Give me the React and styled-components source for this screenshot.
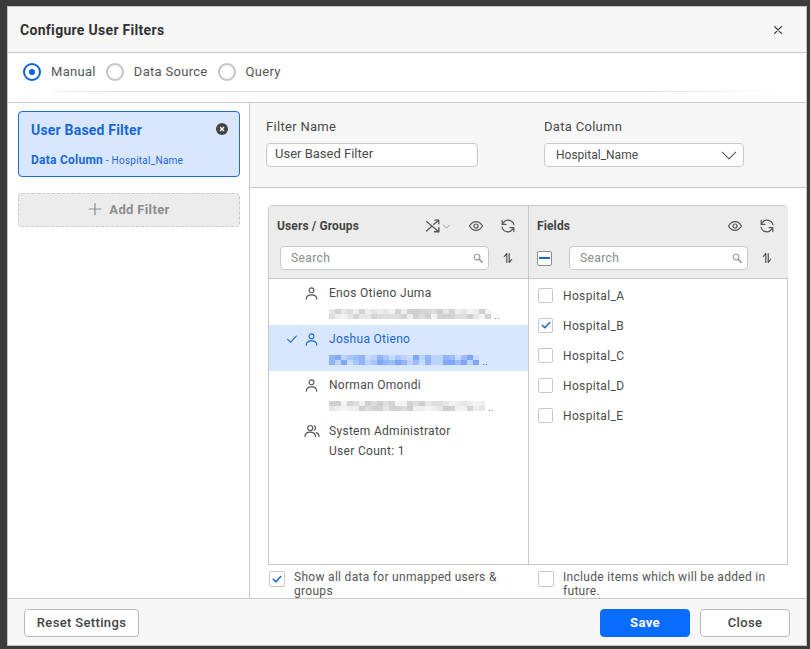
import React from 'react'
import styled, { createGlobalStyle } from 'styled-components'

const GlobalStyle = createGlobalStyle`
	html, body {
		margin: 0;
		padding: 0;
		height: 649px;
		overflow: hidden;
		background: #3b3b3b;
		font-family: Roboto, "Liberation Sans", sans-serif;
		color: #333;
	}
	* {
		box-sizing: border-box;
	}
`

const Dialog = styled.div`
	width: 800px;
	height: 640px;
	margin: 6px 0 0 7px;
	background: #fff;
	border: 1px solid #c4c4c4;
	display: flex;
	flex-direction: column;
	overflow: hidden;
`

const Header = styled.div`
	height: 46px;
	flex: none;
	background: #f7f7f7;
	border-bottom: 1px solid #c8c8c8;
	padding: 0 22px 0 12px;
	display: flex;
	align-items: center;
	justify-content: space-between;
`

const Title = styled.div`
	font-size: 14px;
	font-weight: 700;
	letter-spacing: 0.3px;
	color: #333;
`

const RadioSection = styled.div`
	height: 50px;
	flex: none;
	border-bottom: 1px solid #c8c8c8;
	padding: 0 20px 0 15px;
	display: flex;
	flex-direction: column;
`

const RadioRow = styled.div`
	height: 38px;
	display: flex;
	align-items: center;
`

const RadioItem = styled.label`
	display: flex;
	align-items: center;
	font-size: 13px;
	letter-spacing: 0.3px;
	color: #555;
	margin-right: 10px;
`

const RadioText = styled.span`
	padding-bottom: 2px;
`

const RadioMark = styled.span`
	width: 18px;
	height: 18px;
	border-radius: 50%;
	margin-right: 10px;
	background: #fff;
	border: ${(props) => (props.$on ? '2px solid #0f62d6' : '2px solid #c2c2c2')};
	display: flex;
	align-items: center;
	justify-content: center;

	&::after {
		content: '';
		display: ${(props) => (props.$on ? 'block' : 'none')};
		width: 6px;
		height: 6px;
		border-radius: 50%;
		background: #0f62d6;
	}
`

const Rule = styled.div`
	height: 1px;
	margin-left: 30px;
	background: linear-gradient(90deg, #f4f4f4, #dedede 10%, #dedede 80%, #fff 100%);
`

const Main = styled.div`
	flex: 1;
	min-height: 0;
	display: flex;
`

const Sidebar = styled.div`
	width: 242px;
	flex: none;
	border-right: 1px solid #c8c8c8;
	padding: 8px 9px 0 10px;
`

const FilterTile = styled.div`
	height: 66px;
	background: #d8e7fd;
	border: 1px solid #1a6be0;
	border-radius: 4px;
	padding: 9px 12px;
	position: relative;
`

const TileName = styled.div`
	font-size: 14px;
	font-weight: 700;
	line-height: 18px;
	letter-spacing: 0.2px;
	color: #1a66d8;
`

const TileMeta = styled.div`
	margin-top: 14px;
	font-size: 10px;
	line-height: 14px;
	color: #1a66d8;
	letter-spacing: 0.25px;

	b {
		font-size: 12px;
		letter-spacing: 0.25px;
	}
`

const TileClose = styled.span`
	position: absolute;
	top: 11px;
	right: 11px;
	width: 12px;
	height: 12px;
	display: flex;
`

const AddFilter = styled.div`
	height: 34px;
	margin-top: 16px;
	padding-bottom: 2px;
	background: #ececec;
	border: 1px dashed #c8c8c8;
	border-radius: 4px;
	display: flex;
	align-items: center;
	justify-content: center;
	gap: 7px;
	font-size: 13px;
	font-weight: 700;
	letter-spacing: 0.35px;
	color: #8d8d8d;
`

const Content = styled.div`
	flex: 1;
	min-width: 0;
	display: flex;
	flex-direction: column;
`

const FormPanel = styled.div`
	height: 85px;
	flex: none;
	background: #f7f7f7;
	border-bottom: 1px solid #c8c8c8;
	padding: 15px 0 0 16px;
	display: flex;
`

const Field = styled.div`
	width: ${(props) => props.$width}px;
	margin-right: ${(props) => props.$gap || 0}px;
`

const FieldLabel = styled.div`
	height: 18px;
	line-height: 18px;
	margin-bottom: 7px;
	font-size: 13px;
	letter-spacing: 0.3px;
	color: #4a4a4a;
`

const TextBox = styled.div`
	height: 24px;
	background: #fff;
	border: 1px solid #c8c8c8;
	border-radius: 4px;
	padding: 0 8px 3px;
	display: flex;
	align-items: center;
	justify-content: space-between;
	font-size: 13px;
	letter-spacing: 0;
	color: #4a4a4a;
`

const SelectBox = styled(TextBox)`
	padding: 0 5px 0 11px;
	font-size: 12px;
	letter-spacing: 0;
`

const Mapper = styled.div`
	flex: 1;
	min-height: 0;
	padding: 17px 18px 0;
	display: flex;
	flex-direction: column;
`

const MapTable = styled.div`
	height: 360px;
	flex: none;
	border: 1px solid #c8c8c8;
	border-radius: 4px 4px 0 0;
	display: grid;
	grid-template-columns: 260px 259px;
`

const MapColumn = styled.div`
	min-width: 0;
	display: flex;
	flex-direction: column;
	border-left: ${(props) => (props.$divider ? '1px solid #c8c8c8' : '0')};
	margin-left: ${(props) => (props.$divider ? '-1px' : '0')};
`

const ColumnHead = styled.div`
	height: 73px;
	flex: none;
	background: #ececec;
	border-bottom: 1px solid #c8c8c8;
	padding: 0 13px 0 8px;
`

const HeadTop = styled.div`
	height: 40px;
	display: flex;
	align-items: center;
`

const HeadTitle = styled.div`
	flex: 1;
	font-size: 12px;
	font-weight: 700;
	letter-spacing: 0.12px;
	color: #444;
`

const HeadTools = styled.div`
	display: flex;
	align-items: center;
	gap: 16px;
`

const ShuffleGroup = styled.span`
	display: flex;
	align-items: center;
	gap: 1px;
	margin-right: 1px;
`

const HeadSearch = styled.div`
	display: flex;
	align-items: center;
	padding: 0 2px 0 ${(props) => props.$inset || 0}px;
`

const SearchBox = styled.div`
	flex: 1;
	height: 24px;
	margin-left: ${(props) => props.$offset || 0}px;
	background: #fff;
	border: 1px solid #c8c8c8;
	border-radius: 4px;
	padding: 0 5px 0 10px;
	display: flex;
	align-items: center;
	justify-content: space-between;
	font-size: 12px;
	letter-spacing: 0.4px;
	color: #8a8a8a;
`

const SortButton = styled.span`
	width: 12px;
	margin-left: 13px;
	display: flex;
	justify-content: center;
`

const Check = styled.span`
	width: 16px;
	height: 16px;
	flex: none;
	background: #fff;
	border: 1px solid #c8c8c8;
	border-radius: 2px;
	display: flex;
	align-items: center;
	justify-content: center;
`

const SmallCheck = styled(Check)`
	width: 15px;
	height: 15px;
	border-color: ${(props) => (props.$dark ? '#8f8f8f' : '#c8c8c8')};
`

const MinusMark = styled.span`
	width: 11px;
	height: 2px;
	background: #1a62d6;
`

const UserRow = styled.div`
	height: 46px;
	background: ${(props) => (props.$active ? '#d8e7fd' : 'transparent')};
	color: ${(props) => (props.$active ? '#1a66d8' : '#4a4a4a')};
	padding: 5px 0 0 16px;
	display: grid;
	grid-template-columns: 16px 28px 1fr;
	grid-template-rows: 18px 20px;
	font-size: 12px;
	letter-spacing: 0.3px;
	line-height: 18px;
`

const Tick = styled.span`
	display: flex;
	align-items: center;
`

const UserIcon = styled.span`
	display: flex;
	align-items: center;
	padding-left: 3px;
`

const UserSub = styled.div`
	grid-column: 3;
	display: flex;
	align-items: center;
	padding-top: 2px;
`

const Smudge = styled.div`
	display: grid;
	grid-template-columns: repeat(${(props) => props.$cols}, 6px);
	grid-auto-rows: 5px;
	margin-top: 1px;
	filter: blur(0.7px);
`

const SmudgeCell = styled.span`
	background: ${(props) => props.$color};
`

const Dots = styled.span`
	font-size: 10px;
	line-height: 10px;
	margin: 6px 0 0 3px;
	color: ${(props) => props.$color};
`

const FieldRow = styled.label`
	height: 30px;
	display: flex;
	align-items: center;
	gap: 10px;
	padding-left: 9px;
	font-size: 12px;
	letter-spacing: 0.35px;
	color: #4a4a4a;
`

const FieldName = styled.span`
	padding-top: 2px;
`

const FieldList = styled.div`
	padding-top: 1px;
`

const OptionRow = styled.div`
	flex: 1;
	min-height: 0;
	display: grid;
	grid-template-columns: 260px 260px;
	padding-top: 5px;
	overflow: hidden;
`

const Option = styled.label`
	display: flex;
	gap: 9px;
	padding-left: ${(props) => props.$inset}px;
	font-size: 12px;
	line-height: 14px;
	letter-spacing: 0.3px;
	color: #555;
	width: ${(props) => props.$width}px;

	${Check} {
		margin-top: 1px;
	}
`

const Footer = styled.div`
	height: 47px;
	flex: none;
	background: #f7f7f7;
	border-top: 1px solid #c8c8c8;
	padding: 10px 16px 0;
	display: flex;
	justify-content: space-between;
`

const FooterRight = styled.div`
	display: flex;
	gap: 10px;
`

const Button = styled.button`
	height: 28px;
	width: ${(props) => props.$width}px;
	padding: 0 0 2px;
	border-radius: 4px;
	border: 1px solid ${(props) => (props.$primary ? '#0a6cff' : '#b9b9b9')};
	background: ${(props) => (props.$primary ? '#0a6cff' : '#fff')};
	color: ${(props) => (props.$primary ? '#fff' : '#444')};
	font-family: inherit;
	font-size: 13px;
	font-weight: ${(props) => (props.$primary ? 700 : 500)};
	letter-spacing: 0.35px;
`

const Icon = ({ size = 16, color = '#555', width = 1.2, children }) => (
	<svg width={size} height={size} viewBox="0 0 16 16" fill="none" stroke={color} strokeWidth={width} strokeLinecap="round" strokeLinejoin="round">
		{children}
	</svg>
)

const EyeIcon = () => (
	<Icon>
		<path d="M1.5 8C3.2 5 5.4 3.6 8 3.6S12.8 5 14.5 8c-1.7 3-3.9 4.4-6.5 4.4S3.2 11 1.5 8Z" />
		<circle cx="8" cy="8" r="2" />
	</Icon>
)

const RefreshIcon = () => (
	<Icon>
		<path d="M14 7A6 6 0 0 0 3.2 4.8L2.4 6.2" />
		<path d="M2.2 2.4V6.4H6" />
		<path d="M2 9A6 6 0 0 0 12.8 11.2L13.6 9.8" />
		<path d="M13.8 13.6V9.6H10" />
	</Icon>
)

const ShuffleIcon = () => (
	<Icon>
		<path d="M1.5 3.5 13.5 13.5" />
		<path d="M9.5 13.8H13.8V9.6" strokeWidth="1.4" />
		<path d="M1.5 13 6.5 8.5M8.5 6.5 13.5 2.5" />
		<path d="M9.8 2.2H13.8V6" />
	</Icon>
)

const SortIcon = () => (
	<Icon size={14} color="#3a3a3a" width={1.4}>
		<path d="M6.4 14V2L3 6" />
		<path d="M9.6 2V14L13 10" />
	</Icon>
)

const SearchGlyph = () => (
	<Icon size={10} color="#9a9a9a" width={1.8}>
		<circle cx="6.5" cy="6.5" r="4.5" />
		<path d="M10 10 14.5 14.5" strokeWidth="2.6" />
	</Icon>
)

const PersonIcon = ({ color }) => (
	<Icon size={15} color={color}>
		<circle cx="8" cy="4.6" r="2.6" />
		<path d="M2.4 14c0-3 2-4.6 5.6-4.6S13.6 11 13.6 14" />
	</Icon>
)

const GroupIcon = () => (
	<Icon size={16} color="#555">
		<circle cx="6.2" cy="5" r="2.5" />
		<path d="M1 13.6c0-2.8 1.8-4.4 5.2-4.4s5.2 1.6 5.2 4.4" />
		<path d="M10.2 2.8a2.5 2.5 0 0 1 0 4.4" />
		<path d="M12.4 9.6c1.6.6 2.6 2 2.6 4" />
	</Icon>
)

const CheckMark = ({ size = 12, color = '#1a62d6', width = 2 }) => (
	<Icon size={size} color={color} width={width}>
		<path d="M3 8.4 6.4 11.6 13 4.6" />
	</Icon>
)

// pixelated stand-in for the emails that are blurred out in the picture
const smudgeCells = (cols, seed, tones) => {
	const cells = []
	for (let i = 0; i < cols * 2; i++) {
		const n = Math.abs(Math.sin((i + 1) * seed) * 1000) % tones.length
		cells.push(tones[Math.floor(n)])
	}
	return cells
}

const GREY_TONES = ['#eeeeee', '#e6e6e6', '#dddddd', '#d3d3d3', '#f3f3f3', '#cfcfcf']
const BLUE_TONES = ['#a9c6fa', '#8fb4f8', '#bcd2fb', '#7ea8f6', '#c8dafb', '#9dbdf9']

const Blurred = ({ cols, seed, tones, dotColor }) => (
	<UserSub>
		<Smudge $cols={cols}>
			{smudgeCells(cols, seed, tones).map((c, i) => (
				<SmudgeCell key={i} $color={c} />
			))}
		</Smudge>
		<Dots $color={dotColor}>..</Dots>
	</UserSub>
)

const users = [
	{ name: 'Enos Otieno Juma', cols: 27, seed: 1.7 },
	{ name: 'Joshua Otieno', cols: 25, seed: 2.3, active: true },
	{ name: 'Norman Omondi', cols: 26, seed: 3.1 }
]

const fields = ['Hospital_A', 'Hospital_B', 'Hospital_C', 'Hospital_D', 'Hospital_E']

const App = () => {
	return (
		<>
			<GlobalStyle />
			<Dialog>
				<Header>
					<Title>Configure User Filters</Title>
					<Icon size={12} color="#333" width={1.6}>
						<path d="M3.5 3.5 12.5 12.5M12.5 3.5 3.5 12.5" />
					</Icon>
				</Header>

				<RadioSection>
					<RadioRow>
						<RadioItem><RadioMark $on /><RadioText>Manual</RadioText></RadioItem>
						<RadioItem><RadioMark /><RadioText>Data Source</RadioText></RadioItem>
						<RadioItem><RadioMark /><RadioText>Query</RadioText></RadioItem>
					</RadioRow>
					<Rule />
				</RadioSection>

				<Main>
					<Sidebar>
						<FilterTile>
							<TileName>User Based Filter</TileName>
							<TileMeta><b>Data Column</b> - Hospital_Name</TileMeta>
							<TileClose>
								<svg width="12" height="12" viewBox="0 0 12 12">
									<circle cx="6" cy="6" r="6" fill="#444" />
									<path d="M4 4 8 8M8 4 4 8" stroke="#fff" strokeWidth="1.5" />
								</svg>
							</TileClose>
						</FilterTile>
						<AddFilter>
							<Icon size={14} color="#8d8d8d" width={1.4}>
								<path d="M8 1.5V14.5M1.5 8H14.5" />
							</Icon>
							Add Filter
						</AddFilter>
					</Sidebar>

					<Content>
						<FormPanel>
							<Field $width={212} $gap={66}>
								<FieldLabel>Filter Name</FieldLabel>
								<TextBox>User Based Filter</TextBox>
							</Field>
							<Field $width={200}>
								<FieldLabel>Data Column</FieldLabel>
								<SelectBox>
									Hospital_Name
									<Icon size={18} color="#555" width={1}>
										<path d="M2 5.5 8 11.5 14 5.5" />
									</Icon>
								</SelectBox>
							</Field>
						</FormPanel>

						<Mapper>
							<MapTable>
								<MapColumn>
									<ColumnHead>
										<HeadTop>
											<HeadTitle>Users / Groups</HeadTitle>
											<HeadTools>
												<ShuffleGroup>
													<ShuffleIcon />
													<Icon size={9} color="#777"><path d="M2.5 5.5 8 11 13.5 5.5" /></Icon>
												</ShuffleGroup>
												<EyeIcon />
												<RefreshIcon />
											</HeadTools>
										</HeadTop>
										<HeadSearch $inset={3}>
											<SearchBox>Search<SearchGlyph /></SearchBox>
											<SortButton><SortIcon /></SortButton>
										</HeadSearch>
									</ColumnHead>
									{users.map((u) => (
										<UserRow key={u.name} $active={u.active}>
											<Tick>{u.active && <CheckMark size={14} color="#1a66d8" width={1.2} />}</Tick>
											<UserIcon><PersonIcon color={u.active ? '#1a66d8' : '#555'} /></UserIcon>
											<div>{u.name}</div>
											<Blurred
												cols={u.cols}
												seed={u.seed}
												tones={u.active ? BLUE_TONES : GREY_TONES}
												dotColor={u.active ? '#1a66d8' : '#777'}
											/>
										</UserRow>
									))}
									<UserRow>
										<Tick />
										<UserIcon><GroupIcon /></UserIcon>
										<div>System Administrator</div>
										<UserSub>User Count: 1</UserSub>
									</UserRow>
								</MapColumn>

								<MapColumn $divider>
									<ColumnHead>
										<HeadTop>
											<HeadTitle>Fields</HeadTitle>
											<HeadTools>
												<EyeIcon />
												<RefreshIcon />
											</HeadTools>
										</HeadTop>
										<HeadSearch>
											<SmallCheck $dark><MinusMark /></SmallCheck>
											<SearchBox $offset={17}>Search<SearchGlyph /></SearchBox>
											<SortButton><SortIcon /></SortButton>
										</HeadSearch>
									</ColumnHead>
									<FieldList>
										{fields.map((f) => (
											<FieldRow key={f}>
												<SmallCheck>{f === 'Hospital_B' && <CheckMark />}</SmallCheck>
												<FieldName>{f}</FieldName>
											</FieldRow>
										))}
									</FieldList>
								</MapColumn>
							</MapTable>

							<OptionRow>
								<Option $inset={1} $width={240}>
									<Check><CheckMark /></Check>
									<span>Show all data for unmapped users &amp; groups</span>
								</Option>
								<Option $inset={10} $width={250}>
									<Check />
									<span>Include items which will be added in future.</span>
								</Option>
							</OptionRow>
						</Mapper>
					</Content>
				</Main>

				<Footer>
					<Button $width={115}>Reset Settings</Button>
					<FooterRight>
						<Button $primary $width={90}>Save</Button>
						<Button $width={90}>Close</Button>
					</FooterRight>
				</Footer>
			</Dialog>
		</>
	)
}

export default App
